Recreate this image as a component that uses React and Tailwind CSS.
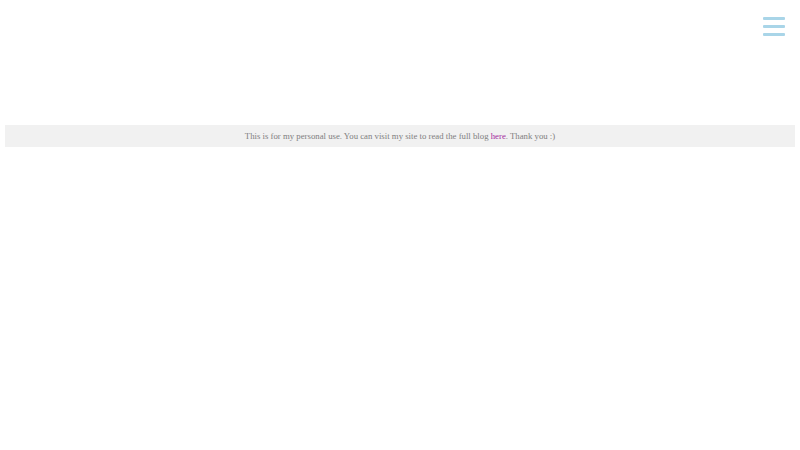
export default function App() {
  return (
    <div className="min-h-[450px] w-full bg-white font-['Liberation_Serif',serif]">
      {/* header */}
      <header className="flex h-[125px] items-start justify-end pr-[15px] pt-[17px]">
        <button className="flex w-[22px] flex-col gap-[5px]" aria-label="menu">
          <span className="h-[3px] w-full rounded-[1px] bg-[#a9d5e8]" />
          <span className="h-[3px] w-full rounded-[1px] bg-[#a9d5e8]" />
          <span className="h-[3px] w-full rounded-[1px] bg-[#a9d5e8]" />
        </button>
      </header>

      {/* notice */}
      <div className="mx-[5px] flex h-[22px] items-center justify-center bg-[#f1f1f1] pt-[2px] text-[8.75px] text-[#808080]">
        <p>
          This is for my personal use. You can visit my site to read the full blog{' '}
          <a href="#" className="text-[#a4279e]">here</a>. Thank you :)
        </p>
      </div>
    </div>
  );
}
